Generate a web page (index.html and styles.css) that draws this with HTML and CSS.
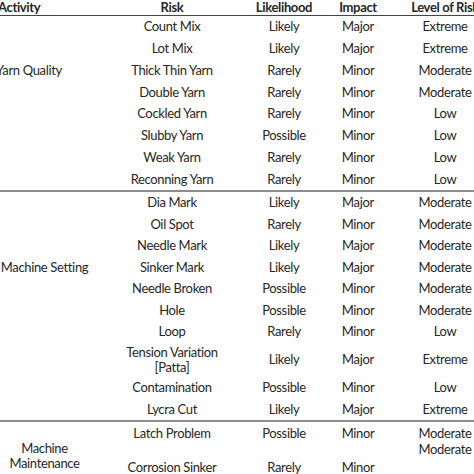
FILE: index.html
```html
<!DOCTYPE html>
<html>
<head>
<meta charset="utf-8">
<link rel="stylesheet" href="styles.css">
</head>
<body>
<div class="table">
  <div class="grid head">
    <div class="c act-h">Activity</div>
    <div class="c">Risk</div>
    <div class="c">Likelihood</div>
    <div class="c">Impact</div>
    <div class="c">Level of Risk</div>
  </div>

  <div class="grid sec s1">
    <div class="c"></div><div class="c">Count Mix</div><div class="c">Likely</div><div class="c">Major</div><div class="c">Extreme</div>
    <div class="c"></div><div class="c">Lot Mix</div><div class="c">Likely</div><div class="c">Major</div><div class="c">Extreme</div>
    <div class="c act yq">Yarn Quality</div><div class="c">Thick Thin Yarn</div><div class="c">Rarely</div><div class="c">Minor</div><div class="c">Moderate</div>
    <div class="c"></div><div class="c">Double Yarn</div><div class="c">Rarely</div><div class="c">Minor</div><div class="c">Moderate</div>
    <div class="c"></div><div class="c">Cockled Yarn</div><div class="c">Rarely</div><div class="c">Minor</div><div class="c">Low</div>
    <div class="c"></div><div class="c">Slubby Yarn</div><div class="c">Possible</div><div class="c">Minor</div><div class="c">Low</div>
    <div class="c"></div><div class="c">Weak Yarn</div><div class="c">Rarely</div><div class="c">Minor</div><div class="c">Low</div>
    <div class="c"></div><div class="c">Reconning Yarn</div><div class="c">Rarely</div><div class="c">Minor</div><div class="c">Low</div>
  </div>

  <div class="grid sec s2">
    <div class="c"></div><div class="c">Dia Mark</div><div class="c">Likely</div><div class="c">Major</div><div class="c">Moderate</div>
    <div class="c"></div><div class="c">Oil Spot</div><div class="c">Rarely</div><div class="c">Minor</div><div class="c">Moderate</div>
    <div class="c"></div><div class="c">Needle Mark</div><div class="c">Likely</div><div class="c">Major</div><div class="c">Moderate</div>
    <div class="c act">Machine Setting</div><div class="c">Sinker Mark</div><div class="c">Likely</div><div class="c">Major</div><div class="c">Moderate</div>
    <div class="c"></div><div class="c">Needle Broken</div><div class="c">Possible</div><div class="c">Minor</div><div class="c">Moderate</div>
    <div class="c"></div><div class="c">Hole</div><div class="c">Possible</div><div class="c">Minor</div><div class="c">Moderate</div>
    <div class="c"></div><div class="c">Loop</div><div class="c">Rarely</div><div class="c">Minor</div><div class="c">Low</div>
    <div class="c"></div><div class="c">Tension Variation<br>[Patta]</div><div class="c">Likely</div><div class="c">Major</div><div class="c">Extreme</div>
    <div class="c"></div><div class="c">Contamination</div><div class="c">Possible</div><div class="c">Minor</div><div class="c">Low</div>
    <div class="c"></div><div class="c">Lycra Cut</div><div class="c">Likely</div><div class="c">Major</div><div class="c">Extreme</div>
  </div>

  <div class="grid sec s3">
    <div class="c act mm">Machine<br>Maintenance</div><div class="c">Latch Problem</div><div class="c">Possible</div><div class="c">Minor</div><div class="c">Moderate</div>
    <div class="c">Corrosion Sinker</div><div class="c">Rarely</div><div class="c">Minor</div><div class="c top">Moderate</div>
  </div>
</div>
</body>
</html>
```

FILE: styles.css
```css
html, body {
  margin: 0;
  padding: 0;
  background: #ffffff;
  overflow: hidden;
}
body {
  width: 474px;
  height: 474px;
  font-family: Lato, "Noto Sans", sans-serif;
  font-size: 13px;
  letter-spacing: -0.35px;
  color: #262626;
}
.table {
  width: 487px;
}
.grid {
  display: grid;
  grid-template-columns: 89px 166px 58px 90px 84px;
}
.c {
  display: flex;
  align-items: center;
  justify-content: center;
  text-align: center;
  line-height: 15px;
  white-space: nowrap;
}
.head {
  height: 15px;
  font-weight: bold;
  border-bottom: 1px solid #444444;
}
.act-h {
  justify-content: flex-start;
  margin-left: -2px;
}
.sec {
  border-top: 2px solid #8c8c8c;
}
.head + .sec {
  border-top: none;
}
.s1 {
  grid-template-rows: repeat(8, 21.75px);
}
.s2 {
  grid-template-rows: repeat(7, 21.5px) 34.5px 21.5px 21.5px;
}
.s3 {
  grid-template-rows: 22px 46px;
}
.yq {
  justify-content: flex-start;
  margin-left: -4px;
}
.mm {
  grid-row: 1 / span 2;
}
.top {
  align-items: flex-start;
  margin-top: -2px;
}
```
